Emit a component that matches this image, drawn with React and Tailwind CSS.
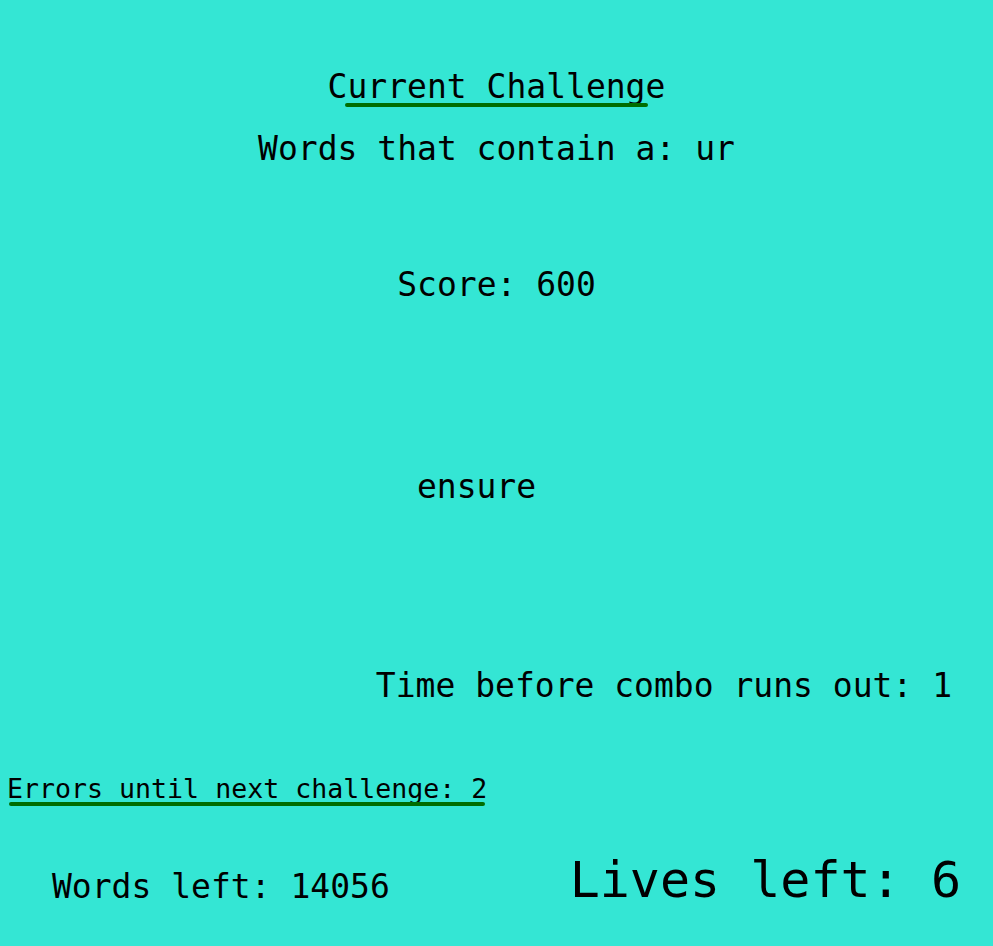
const mono = { fontFamily: '"DejaVu Sans Mono", "Liberation Mono", monospace' };

function Underlined({ children, className, barClass }) {
  return (
    <div className={`inline-flex flex-col ${className}`}>
      <span>{children}</span>
      <span className={`block h-[4px] rounded-full bg-[#006d00] ${barClass}`}></span>
    </div>
  );
}

export default function App() {
  const challenge = 'ur';
  const score = 600;
  const word = 'ensure';
  const comboTime = 1;
  const errorsLeft = 2;
  const wordsLeft = 14056;
  const lives = 6;

  return (
    <div className="min-h-screen w-full bg-[#34e6d4] text-black overflow-hidden" style={mono}>
      <div className="flex flex-col pt-[67px]">
        {/* Challenge header */}
        <div className="flex justify-center">
          <Underlined className="text-[33px] leading-[40px]" barClass="-mt-[4px] mx-[17px]">
            Current Challenge
          </Underlined>
        </div>
        <p className="mt-[22px] text-center text-[33px] leading-[40px]">
          Words that contain a: {challenge}
        </p>

        <p className="mt-[96px] text-center text-[33px] leading-[40px]">Score: {score}</p>

        {/* Current word */}
        <div className="mt-[162px] flex justify-center pr-[40px] text-[33px] leading-[40px]">
          {word}
        </div>

        <div className="mt-[159px] flex justify-end pr-[41px] text-[33px] leading-[40px]">
          Time before combo runs out: {comboTime}
        </div>

        <div className="mt-[67px] pl-[7px]">
          <Underlined className="text-[26.6px] leading-[32px]" barClass="-mt-[3px] mx-[2px]">
            Errors until next challenge: {errorsLeft}
          </Underlined>
        </div>

        {/* Footer stats */}
        <div className="mt-[44px] flex items-start justify-between pl-[52px] pr-[32px]">
          <span className="mt-[17px] text-[33px] leading-[40px]">Words left: {wordsLeft}</span>
          <span className="text-[50px] leading-[60px]">Lives left: {lives}</span>
        </div>
      </div>
    </div>
  );
}
